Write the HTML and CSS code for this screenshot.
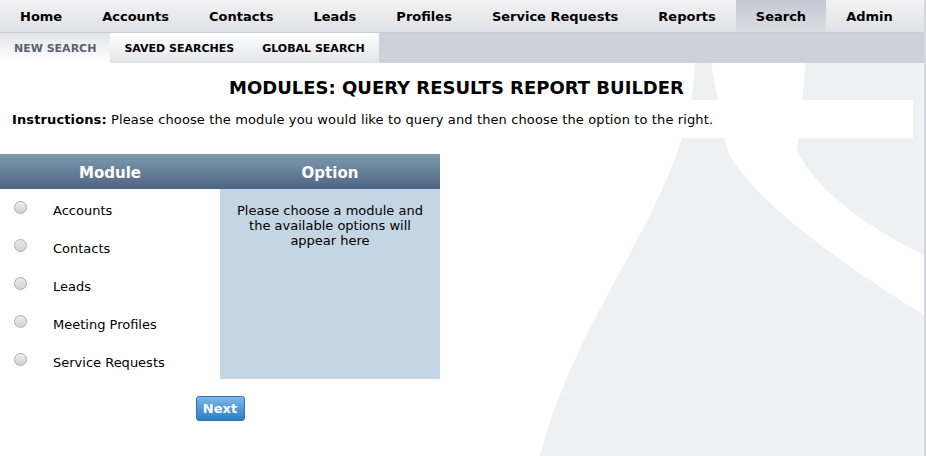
FILE: index.html
```html
<!DOCTYPE HTML>
<html lang="en-US">
<head>
	<meta charset="UTF-8" />
	<title>Search - Report Builder</title>
	<link rel="stylesheet" href="styles.css">
</head>
<body>

	<div class="page">

		<svg class="watermark" width="924" height="456" viewBox="0 0 924 456" aria-hidden="true">
			<path class="mark" d="M695,63 H924 V456 H540 C580,300 690,200 695,63 Z" />
			<path class="cut" d="M711,63 H806 L797,150 C812,185 862,225 924,255 V315 C822,252 747,192 727,150 Z" />
		</svg>

		<ul class="topnav">
			<li><a href="#">Home</a></li>
			<li><a href="#">Accounts</a></li>
			<li><a href="#">Contacts</a></li>
			<li><a href="#">Leads</a></li>
			<li><a href="#">Profiles</a></li>
			<li><a href="#">Service Requests</a></li>
			<li><a href="#">Reports</a></li>
			<li class="active"><a href="#">Search</a></li>
			<li><a href="#">Admin</a></li>
		</ul>

		<ul class="subnav">
			<li class="active"><a href="#">New Search</a></li>
			<li><a href="#">Saved Searches</a></li>
			<li><a href="#">Global Search</a></li>
		</ul>

		<div class="content">

			<h1>MODULES: QUERY RESULTS REPORT BUILDER</h1>

			<p class="instructions"><b>Instructions:</b> Please choose the module you would like to query and then choose the option to the right.</p>

			<div class="builder">
				<div class="builder-head">Module</div>
				<div class="builder-head">Option</div>

				<div class="module-list">
					<label class="module"><input type="radio" name="module" value="accounts" /><span>Accounts</span></label>
					<label class="module"><input type="radio" name="module" value="contacts" /><span>Contacts</span></label>
					<label class="module"><input type="radio" name="module" value="leads" /><span>Leads</span></label>
					<label class="module"><input type="radio" name="module" value="profiles" /><span>Meeting Profiles</span></label>
					<label class="module"><input type="radio" name="module" value="requests" /><span>Service Requests</span></label>
				</div>

				<div class="option-box">Please choose a module and the available options will appear here</div>

				<div class="actions">
					<button type="button" class="btn">Next</button>
				</div>
			</div>

		</div>

	</div>

</body>
</html>
```

FILE: styles.css
```css
* {
	margin: 0;
	padding: 0;
	box-sizing: border-box;
}
body {
	background-color: #fff;
	color: #000;
	font-family: "DejaVu Sans", Verdana, sans-serif;
	font-size: 13px;
}
a {
	color: inherit;
	text-decoration: none;
}
ul {
	list-style: none;
}
.page {
	border-right: 2px solid #d6d8df;
	min-height: 456px;
	position: relative;
	width: 926px;
}
.watermark {
	left: 0;
	position: absolute;
	top: 0;
	z-index: 0;
}
.watermark .mark {
	fill: #eff0f2;
}
.watermark .cut {
	fill: #fff;
}

/* main menu */
.topnav {
	background: linear-gradient(#f2f2f3, #dfe1e6);
	border-bottom: 1px solid #c9ccd4;
	display: flex;
	height: 33px;
	position: relative;
}
.topnav a {
	display: block;
	font-weight: bold;
	height: 32px;
	line-height: 32px;
	padding: 1px 20px 0;
}
.topnav .active a {
	background: linear-gradient(#c4c9d2, #dadde3);
}

/* sub menu */
.subnav {
	background-color: #cdd1d9;
	display: flex;
	height: 30px;
	position: relative;
}
.subnav a {
	background: linear-gradient(#ffffff, #e3e5ea);
	display: block;
	font-size: 11px;
	font-weight: bold;
	height: 30px;
	line-height: 30px;
	padding: 1px 14px 0;
	text-transform: uppercase;
}
.subnav .active a {
	background: linear-gradient(#e4e6ea, #ffffff);
	color: #5b6170;
}

.content {
	position: relative;
	width: 913px;
	z-index: 1;
}
h1 {
	font-size: 18px;
	line-height: 22px;
	padding: 14px 0 1px;
	text-align: center;
}
.instructions {
	background-color: #fff;
	letter-spacing: 0.12px;
	line-height: 37px;
	padding: 1px 0 0 12px;
}

/* module / option picker */
.builder {
	display: grid;
	grid-template-columns: 220px 220px;
	margin-top: 16px;
}
.builder-head {
	background: linear-gradient(#7f9bad, #4e6484);
	color: #fff;
	font-size: 15px;
	font-weight: bold;
	height: 35px;
	line-height: 35px;
	padding-top: 2px;
	text-align: center;
}
.module {
	align-items: center;
	display: flex;
	height: 38px;
	padding: 2px 0 0 14px;
}
.module input {
	-webkit-appearance: none;
	appearance: none;
	background: linear-gradient(#ececec, #d2d2d2);
	border: 1px solid #adadad;
	border-radius: 50%;
	height: 13px;
	margin: -3px 26px 0 0;
	width: 13px;
}
.module span {
	padding-top: 2px;
}
.option-box {
	background-color: #c4d5e3;
	line-height: 15px;
	padding: 14px 14px;
	text-align: center;
}
.actions {
	grid-column: 1 / 3;
	padding-top: 17px;
	text-align: center;
}
.btn {
	background: linear-gradient(#7db8e5, #2a7dc2);
	border: 1px solid #2d76b5;
	border-radius: 3px;
	color: #fff;
	font-family: inherit;
	font-size: 13px;
	font-weight: bold;
	height: 25px;
	width: 49px;
}
```
